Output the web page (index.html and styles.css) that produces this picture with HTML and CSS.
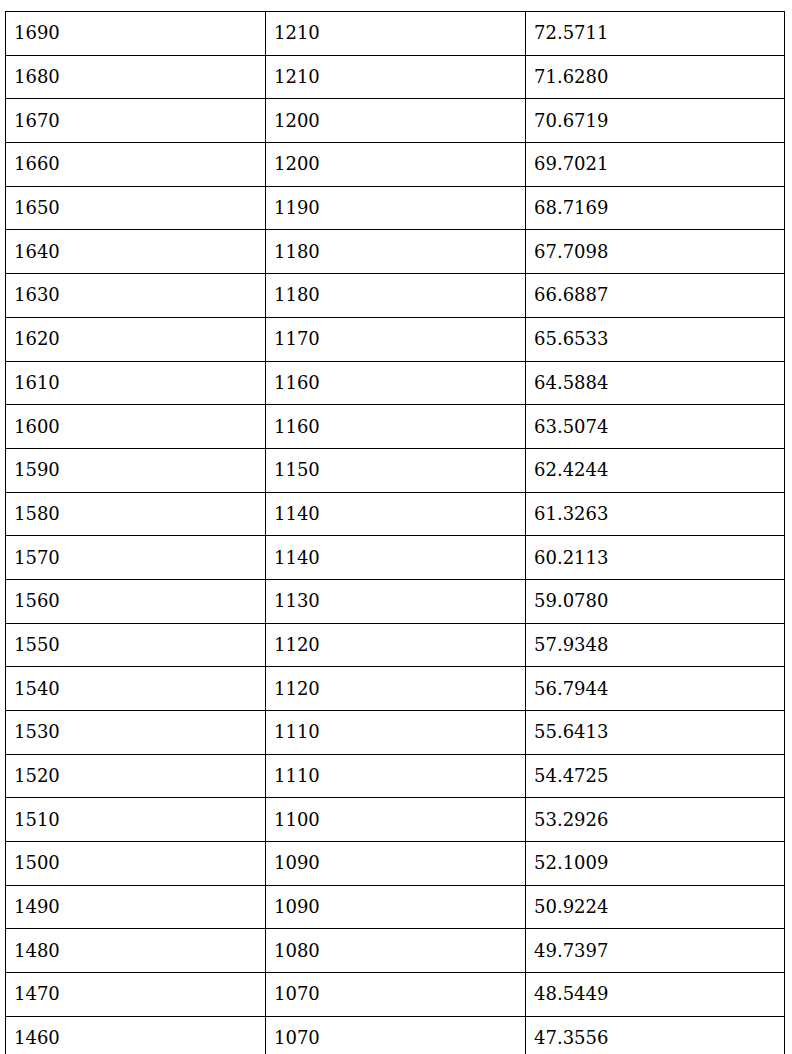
FILE: index.html
```html
<!DOCTYPE html>
<html>
<head>
<meta charset="utf-8">
<link rel="stylesheet" href="styles.css">
</head>
<body>
<table class="data">
<colgroup>
<col class="col-a">
<col class="col-b">
<col class="col-c">
</colgroup>
<tbody>
<tr><td>1690</td><td>1210</td><td>72.5711</td></tr>
<tr><td>1680</td><td>1210</td><td>71.6280</td></tr>
<tr><td>1670</td><td>1200</td><td>70.6719</td></tr>
<tr><td>1660</td><td>1200</td><td>69.7021</td></tr>
<tr><td>1650</td><td>1190</td><td>68.7169</td></tr>
<tr><td>1640</td><td>1180</td><td>67.7098</td></tr>
<tr><td>1630</td><td>1180</td><td>66.6887</td></tr>
<tr><td>1620</td><td>1170</td><td>65.6533</td></tr>
<tr><td>1610</td><td>1160</td><td>64.5884</td></tr>
<tr><td>1600</td><td>1160</td><td>63.5074</td></tr>
<tr><td>1590</td><td>1150</td><td>62.4244</td></tr>
<tr><td>1580</td><td>1140</td><td>61.3263</td></tr>
<tr><td>1570</td><td>1140</td><td>60.2113</td></tr>
<tr><td>1560</td><td>1130</td><td>59.0780</td></tr>
<tr><td>1550</td><td>1120</td><td>57.9348</td></tr>
<tr><td>1540</td><td>1120</td><td>56.7944</td></tr>
<tr><td>1530</td><td>1110</td><td>55.6413</td></tr>
<tr><td>1520</td><td>1110</td><td>54.4725</td></tr>
<tr><td>1510</td><td>1100</td><td>53.2926</td></tr>
<tr><td>1500</td><td>1090</td><td>52.1009</td></tr>
<tr><td>1490</td><td>1090</td><td>50.9224</td></tr>
<tr><td>1480</td><td>1080</td><td>49.7397</td></tr>
<tr><td>1470</td><td>1070</td><td>48.5449</td></tr>
<tr><td>1460</td><td>1070</td><td>47.3556</td></tr>
</tbody>
</table>
</body>
</html>
```

FILE: styles.css
```css
html, body {
  margin: 0;
  padding: 0;
  background: #fff;
}
body {
  font-family: "DejaVu Serif", "Liberation Serif", serif;
  font-size: 18px;
  color: #000;
}
.data {
  margin: 11px 0 0 5px;
  border-collapse: collapse;
  width: 780px;
  table-layout: fixed;
}
.col-a,
.col-b {
  width: 260px;
}
.col-c {
  width: 259px;
}
.data td {
  border: 1px solid #000;
  padding: 0 8px;
  height: 43.7px;
  box-sizing: border-box;
  vertical-align: middle;
  line-height: 1;
}
```
